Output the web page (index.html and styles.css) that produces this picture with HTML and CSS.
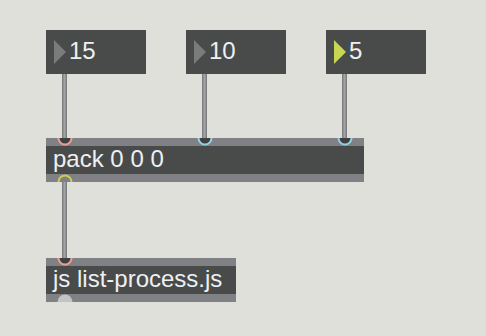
FILE: index.html
```html
<!DOCTYPE html>
<html>
<head>
<meta charset="utf-8">
<link rel="stylesheet" href="styles.css">
</head>
<body>
<div class="patcher">
  <div class="obj number n1"><span class="tri"></span><span class="val">15</span></div>
  <div class="obj number n2"><span class="tri"></span><span class="val">10</span></div>
  <div class="obj number n3"><span class="tri active"></span><span class="val">5</span></div>
  <div class="obj box pack"><span class="label">pack 0 0 0</span></div>
  <div class="obj box js"><span class="label">js list-process.js</span></div>
  <svg class="cords" width="486" height="336" viewBox="0 0 486 336">
    <g class="cord">
      <line x1="64.5" y1="74" x2="64.5" y2="142"/>
      <line x1="204.5" y1="74" x2="204.5" y2="142"/>
      <line x1="344.5" y1="74" x2="344.5" y2="142"/>
      <line x1="64.5" y1="182" x2="64.5" y2="262"/>
    </g>
    <g class="cord-core">
      <line x1="64.5" y1="74" x2="64.5" y2="142"/>
      <line x1="204.5" y1="74" x2="204.5" y2="142"/>
      <line x1="344.5" y1="74" x2="344.5" y2="142"/>
      <line x1="64.5" y1="182" x2="64.5" y2="262"/>
    </g>
    <path class="inlet pink" d="M58.5 138 A6.5 6.5 0 0 0 71.5 138"/>
    <path class="inlet cyan" d="M198.5 138 A6.5 6.5 0 0 0 211.5 138"/>
    <path class="inlet cyan" d="M338.5 138 A6.5 6.5 0 0 0 351.5 138"/>
    <path class="outlet yellow" d="M58.5 182 A6.5 6.5 0 0 1 71.5 182"/>
    <path class="inlet pink" d="M58.5 258 A6.5 6.5 0 0 0 71.5 258"/>
    <path class="outlet-fill" d="M57.5 302 A7.5 7.5 0 0 1 72.5 302 Z"/>
  </svg>
</div>
</body>
</html>
```

FILE: styles.css
```css
html, body {
  margin: 0;
  padding: 0;
  background: #dfe0da;
}

.patcher {
  position: relative;
  width: 486px;
  height: 336px;
  overflow: hidden;
  background: #dfe0da;
  font-family: "Liberation Sans", Arial, sans-serif;
  color: #eef0f2;
}

.obj {
  position: absolute;
  box-sizing: border-box;
  height: 44px;
}

.number {
  width: 100px;
  top: 30px;
  background: #494b4a;
  display: flex;
  align-items: flex-start;
}

.n1 { left: 46px; }
.n2 { left: 186px; }
.n3 { left: 326px; }

.tri {
  margin: 10px 0 0 8px;
  width: 0;
  height: 0;
  border-top: 12px solid transparent;
  border-bottom: 12px solid transparent;
  border-left: 12px solid #7a7c7c;
}

.tri.active {
  border-left-color: #c9d651;
}

.val {
  font-size: 24px;
  line-height: 24px;
  padding: 9px 0 0 3px;
}

.box {
  left: 46px;
  background: #494b4a;
  border-top: 8px solid #808185;
  border-bottom: 8px solid #808185;
}

.pack {
  top: 138px;
  width: 318px;
}

.js {
  top: 258px;
  width: 190px;
}

.label {
  display: block;
  font-size: 24px;
  line-height: 24px;
  padding: 1px 0 0 7px;
  white-space: nowrap;
}

.cords {
  position: absolute;
  left: 0;
  top: 0;
  pointer-events: none;
}

.cord line {
  stroke: #7e7f81;
  stroke-width: 5;
}

.cord-core line {
  stroke: #a4a5a6;
  stroke-width: 2;
}

.inlet {
  fill: #3e4041;
  stroke-width: 2;
}

.outlet {
  fill: none;
  stroke-width: 2;
}

.pink { stroke: #e9a096; }
.cyan { stroke: #93d2e2; }
.yellow { stroke: #cfcc55; }

.outlet-fill {
  fill: #c3c3c3;
}
```
